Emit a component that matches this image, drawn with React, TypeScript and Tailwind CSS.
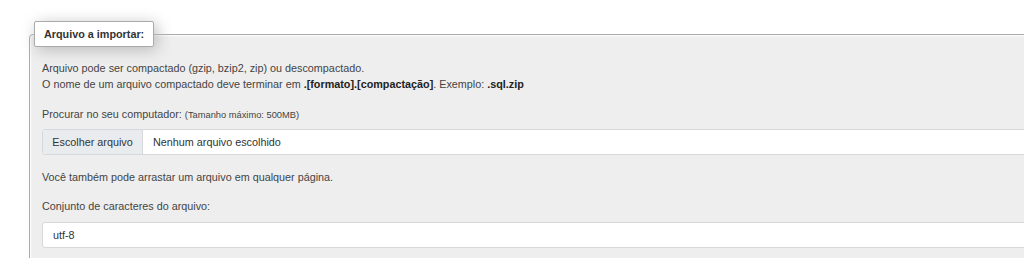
export default function App() {
  return (
    <div
      className="h-[258px] w-full overflow-hidden bg-white pt-[21px] pl-[29px] text-[10.8px] leading-4 text-[#444]"
      style={{ fontFamily: '"Liberation Sans", Arial, sans-serif' }}
    >
      <fieldset className="w-[1100px] rounded-t-[4px] border border-[#aaa] bg-[#eee] px-[12px] pt-[13px] pb-6 shadow-[inset_1px_1px_2px_#fff]">
        <legend className="-ml-[8px] rounded-[2px] border border-[#aaa] bg-white px-[9px] py-[4px] font-bold text-[#333] shadow-[3px_3px_15px_#bbb]">
          Arquivo a importar:
        </legend>

        <p>
          Arquivo pode ser compactado (gzip, bzip2, zip) ou descompactado.
          <br />
          O nome de um arquivo compactado deve terminar em{" "}
          <b className="text-[#222]">.[formato].[compactação]</b>. Exemplo:{" "}
          <b className="text-[#222]">.sql.zip</b>
        </p>

        <p className="mt-[14px]">
          Procurar no seu computador: <span className="text-[9.3px]">(Tamanho máximo: 500MB)</span>
        </p>

        <div className="mt-[6px] flex h-[26px] w-[1040px] items-stretch rounded-[3px] border border-[#d6d9dc] bg-white">
          <span className="flex w-[100px] items-center justify-center rounded-l-[3px] border-r border-[#d6d9dc] bg-[#e9ecef] text-[#333]">
            Escolher arquivo
          </span>
          <span className="flex items-center pl-[10px] text-[#333]">Nenhum arquivo escolhido</span>
        </div>

        <p className="mt-[14px]">Você também pode arrastar um arquivo em qualquer página.</p>

        <p className="mt-[13px]">Conjunto de caracteres do arquivo:</p>

        <div className="mt-[8px] flex h-[26px] w-[1040px] items-center rounded-[3px] border border-[#d6d9dc] bg-white pl-[10px] text-[#333]">
          utf-8
        </div>
      </fieldset>
    </div>
  );
}
